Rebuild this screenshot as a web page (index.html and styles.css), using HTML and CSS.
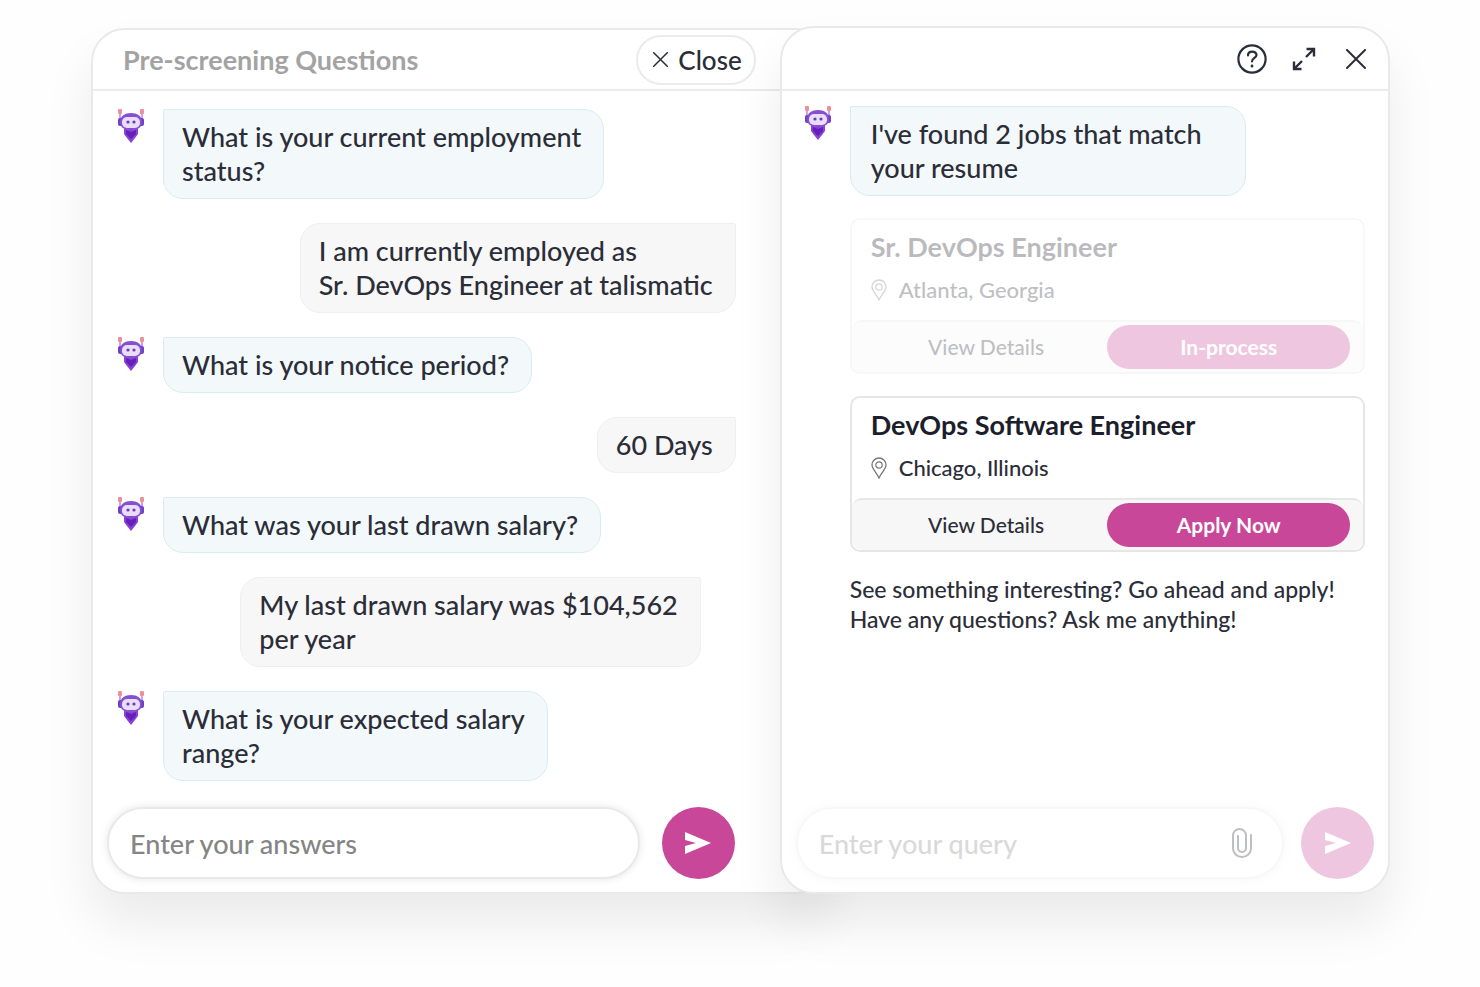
FILE: index.html
```html
<!DOCTYPE html>
<html lang="en">
<head>
  <meta charset="UTF-8" />
  <meta name="viewport" content="width=device-width, initial-scale=1.0"/>
  <title>Pre-screening Questions</title>
  <link rel="stylesheet" href="styles.css">
</head>
<body>

<!-- shared icons -->
<svg class="sprite" aria-hidden="true">
  <symbol id="bot" viewBox="0 0 26 34">
    <path d="M2 4v8M24 4v8" stroke="#c9a3e6" stroke-width="2"/>
    <rect x="0" y="0" width="4" height="5" rx="1" fill="#ee8fa0"/>
    <rect x="22" y="0" width="4" height="5" rx="1" fill="#ee8fa0"/>
    <rect x="0" y="9" width="5" height="8" rx="2" fill="#6f3fc4"/>
    <rect x="21" y="9" width="5" height="8" rx="2" fill="#6f3fc4"/>
    <path d="M2 13C2 7 7 4 13 4s11 3 11 9-5 8-11 8S2 19 2 13z" fill="#8450d2"/>
    <rect x="4" y="8" width="18" height="11" rx="5" fill="#eadcfb"/>
    <circle cx="10" cy="13" r="1.6" fill="#6a3fa8"/>
    <circle cx="16" cy="13" r="1.6" fill="#6a3fa8"/>
    <path d="M6 19c4 2 10 2 14 0v6l-3 4-4 5-4-5-3-4z" fill="#8a42d6"/>
    <path d="M8 21l5 2 5-2v4l-5 5-5-5z" fill="#6420b8"/>
  </symbol>
  <symbol id="cross" viewBox="0 0 20 20">
    <path d="M1 1l18 18M19 1L1 19" fill="none" stroke="currentColor" stroke-width="2" stroke-linecap="round"/>
  </symbol>
  <symbol id="pin" viewBox="0 0 16 22">
    <path d="M8 21C6 16 1 12 1 8a7 7 0 0 1 14 0c0 4-5 8-7 13z" fill="none" stroke="currentColor" stroke-width="1.3"/>
    <circle cx="8" cy="8" r="3.2" fill="none" stroke="currentColor" stroke-width="1.2"/>
  </symbol>
  <symbol id="send" viewBox="0 0 26 22">
    <path d="M0 0l26 11L0 22v-8l11-3-11-3z" fill="#fff"/>
  </symbol>
</svg>

<main class="stage">

  <section class="panel questions">
    <header class="panel-header">
      <h2>Pre-screening Questions</h2>
      <button class="close-btn" type="button">
        <svg width="15" height="15"><use href="#cross"/></svg>
        Close
      </button>
    </header>

    <div class="chat">
      <div class="msg bot">
        <svg class="avatar" role="img" aria-label="Bot"><use href="#bot"/></svg>
        <p class="bubble">What is your current employment<br>status?</p>
      </div>
      <div class="msg user">
        <p class="bubble">I am currently employed as<br>Sr. DevOps Engineer at talismatic</p>
      </div>
      <div class="msg bot">
        <svg class="avatar" role="img" aria-label="Bot"><use href="#bot"/></svg>
        <p class="bubble">What is your notice period?</p>
      </div>
      <div class="msg user">
        <p class="bubble">60 Days</p>
      </div>
      <div class="msg bot">
        <svg class="avatar" role="img" aria-label="Bot"><use href="#bot"/></svg>
        <p class="bubble">What was your last drawn salary?</p>
      </div>
      <div class="msg user inset">
        <p class="bubble">My last drawn salary was $104,562<br>per year</p>
      </div>
      <div class="msg bot">
        <svg class="avatar" role="img" aria-label="Bot"><use href="#bot"/></svg>
        <p class="bubble">What is your expected salary<br>range?</p>
      </div>
    </div>

    <form class="composer">
      <div class="field">
        <input type="text" placeholder="Enter your answers" aria-label="Enter your answers">
      </div>
      <button class="send-btn" type="button" aria-label="Send">
        <svg width="26" height="22"><use href="#send"/></svg>
      </button>
    </form>
  </section>

  <section class="panel jobs">
    <header class="panel-header">
      <button class="icon-btn" type="button" aria-label="Help">
        <svg width="30" height="30" viewBox="0 0 30 30" fill="none" stroke="currentColor" stroke-width="2.2" stroke-linecap="round">
          <circle cx="15" cy="15" r="13.6"/>
          <path d="M11 11.5c0-5 8.5-5 8.5-.5 0 3-4.5 3-4.5 6.5"/>
          <path d="M15 21.8v.4" stroke-width="2.6"/>
        </svg>
      </button>
      <button class="icon-btn" type="button" aria-label="Expand">
        <svg width="24" height="24" viewBox="0 0 24 24" fill="none" stroke="currentColor" stroke-width="2.4">
          <path d="M14 10l8-8M14.5 2H22v7.5M10 14l-8 8M9.5 22H2v-7.5"/>
        </svg>
      </button>
      <button class="icon-btn" type="button" aria-label="Close">
        <svg width="20" height="20"><use href="#cross"/></svg>
      </button>
    </header>

    <div class="chat">
      <div class="msg bot">
        <svg class="avatar" role="img" aria-label="Bot"><use href="#bot"/></svg>
        <p class="bubble">I've found 2 jobs that match your resume</p>
      </div>

      <article class="job faded">
        <div class="job-info">
          <h3>Sr. DevOps Engineer</h3>
          <p><svg width="16" height="22"><use href="#pin"/></svg>Atlanta, Georgia</p>
        </div>
        <div class="job-actions">
          <a href="#">View Details</a>
          <button type="button">In-process</button>
        </div>
      </article>

      <article class="job">
        <div class="job-info">
          <h3>DevOps Software Engineer</h3>
          <p><svg width="16" height="22"><use href="#pin"/></svg>Chicago, Illinois</p>
        </div>
        <div class="job-actions">
          <a href="#">View Details</a>
          <button type="button">Apply Now</button>
        </div>
      </article>

      <p class="hint">See something interesting? Go ahead and apply!<br>Have any questions? Ask me anything!</p>
    </div>

    <form class="composer faded">
      <div class="field">
        <input type="text" placeholder="Enter your query" aria-label="Enter your query">
        <button class="icon-btn" type="button" aria-label="Attach file">
          <svg width="20" height="30" viewBox="0 0 20 30" fill="none" stroke="currentColor" stroke-width="2" stroke-linecap="round">
            <path d="M19 7v13.500a9 8.500 0 0 1-18 0V7.500a6.500 6.500 0 0 1 13 0V20a4 4 0 0 1-8 0V8"/>
          </svg>
        </button>
      </div>
      <button class="send-btn" type="button" aria-label="Send">
        <svg width="26" height="22"><use href="#send"/></svg>
      </button>
    </form>
  </section>

</main>

</body>
</html>
```
FILE: styles.css
```css
* {
  box-sizing: border-box;
}
body {
  margin: 0;
  font-family: Lato, sans-serif;
  font-size: 27px;
  font-weight: 500;
  line-height: 34px;
  color: #2b2d38;
  background-color: #fefefe;
}
h2, h3, p {
  margin: 0;
}
button, input {
  font: inherit;
  color: inherit;
  border: none;
  background: none;
  padding: 0;
}
button {
  cursor: pointer;
}
svg {
  display: block;
  flex: none;
}
.sprite {
  display: none;
}

.stage {
  display: flex;
  padding: 26px 90px 94px 91px;
}
.panel {
  display: flex;
  flex-direction: column;
  min-width: 0;
  background-color: #fff;
  border: 2px solid #e9e9e9;
  border-radius: 34px;
  box-shadow: 0 30px 50px rgba(0,0,0,0.08);
}
.questions {
  flex: 738 1 0;
  margin-top: 2px;
}
/* right panel lies over the edge of the left one */
.jobs {
  flex: 609 1 0;
  margin-left: -50px;
  z-index: 1;
}

.panel-header {
  display: flex;
  align-items: center;
  border-bottom: 2px solid #ebebeb;
}
.questions .panel-header {
  height: 61px;
  justify-content: space-between;
  padding: 0 72px 0 30px;
}
.jobs .panel-header {
  height: 63px;
  justify-content: flex-end;
  gap: 22px;
  padding-right: 17px;
}
.panel-header h2 {
  font-size: 27px;
  color: #a3a3a3;
}
.icon-btn {
  display: flex;
  align-items: center;
  justify-content: center;
  width: 30px;
}
.close-btn {
  display: flex;
  align-items: center;
  gap: 10px;
  height: 50px;
  padding: 0 12px 0 15px;
  border: 2px solid #ebebeb;
  border-radius: 25px;
  font-size: 26px;
}

.chat {
  flex: 1;
  display: flex;
  flex-direction: column;
  gap: 24px;
}
.questions .chat {
  padding: 18px 92px 26px 25px;
}
.jobs .chat {
  gap: 22px;
  padding: 15px 23px 26px 23px;
}
.msg {
  display: flex;
}
.msg.user {
  justify-content: flex-end;
}
.msg.inset {
  padding-right: 35px;
}
.avatar {
  width: 26px;
  height: 34px;
  margin-right: 19px;
}
.bubble {
  padding: 10px 22px 10px 18px;
  border: 1px solid #d9ecf1;
  border-radius: 2px 20px 20px 20px;
  background-color: #f3f9fb;
}
.jobs .bubble {
  max-width: 396px;
  padding: 10px 20px;
}
.user .bubble {
  border-color: #efefef;
  border-radius: 20px 2px 20px 20px;
  background-color: #f7f7f7;
}

.job {
  margin-left: 45px;
  border: 2px solid #e6e6e6;
  border-radius: 10px;
}
.faded {
  opacity: 0.3;
}
.job-info {
  padding: 10px 19px 14px;
}
.job-info h3 {
  font-size: 27px;
  line-height: 34px;
  color: #1d1e2c;
}
.job-info p {
  display: flex;
  align-items: center;
  gap: 12px;
  margin-top: 10px;
  font-size: 22px;
  line-height: 32px;
}
.job-info svg {
  color: #777;
}
.job-actions {
  display: grid;
  grid-template-columns: 1fr 1fr;
  align-items: center;
  padding: 3px 13px;
  border-top: 2px solid #e6e6e6;
  border-radius: 10px;
  background-color: #f7f7f7;
  font-size: 21px;
  text-align: center;
}
.job-actions a {
  color: inherit;
  text-decoration: none;
}
.job-actions button {
  height: 44px;
  border-radius: 22px;
  color: #fff;
  font-weight: bold;
  background-color: #c94799;
}
.hint {
  margin-left: 45px;
  font-size: 23px;
  line-height: 30px;
}

.composer {
  display: flex;
  align-items: center;
  justify-content: space-between;
  gap: 22px;
  padding: 0 93px 13px 14px;
}
.jobs .composer {
  gap: 17px;
  padding: 0 14px 13px 14px;
}
.field {
  flex: 1;
  display: flex;
  align-items: center;
  min-width: 0;
  height: 72px;
  padding: 0 25px 0 21px;
  border: 2px solid #e9e9e9;
  border-radius: 36px;
  background-color: #fff;
  box-shadow: 0 0 8px rgba(0,0,0,0.1);
}
.field input {
  flex: 1;
  min-width: 0;
  height: 100%;
  outline: none;
}
.field input::placeholder {
  color: #858585;
  opacity: 1;
}
.send-btn {
  display: flex;
  align-items: center;
  justify-content: center;
  width: 73px;
  height: 72px;
  border-radius: 50%;
  background-color: #c94799;
}
```
